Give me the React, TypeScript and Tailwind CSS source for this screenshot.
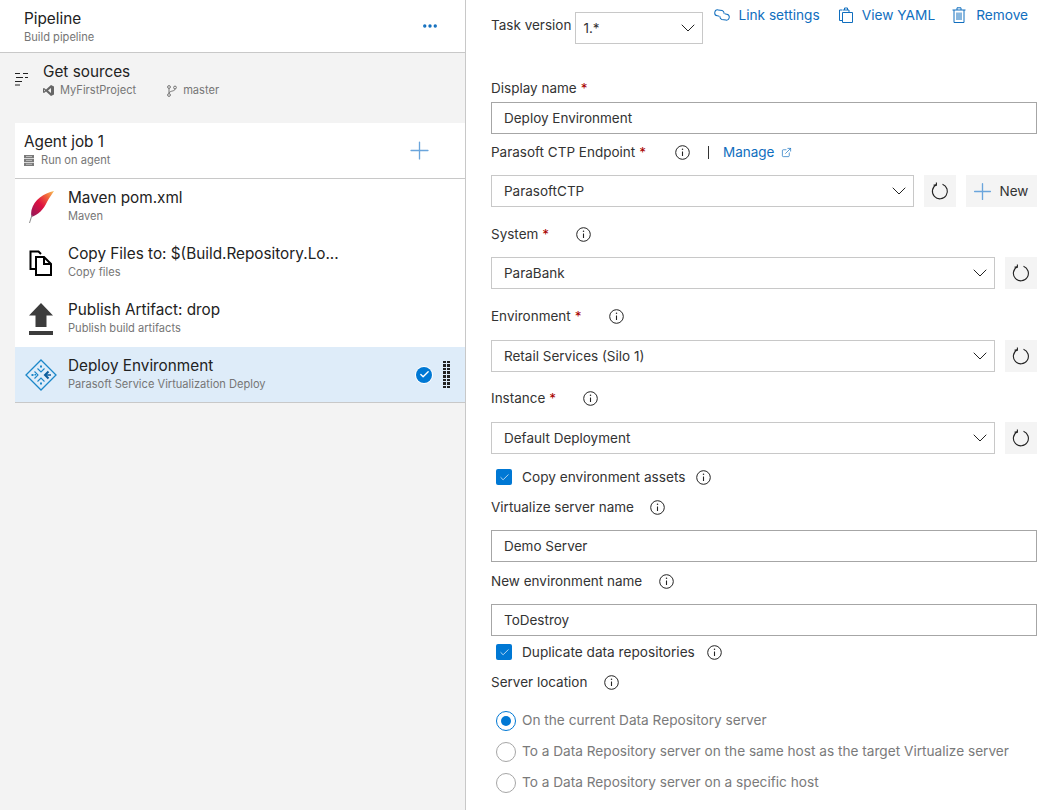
import { Check, ChevronDown, Ellipsis, ExternalLink, Plus } from "lucide-react";
import type { ReactNode } from "react";

const font = { fontFamily: "Inter, 'Noto Sans', sans-serif" };

function Info({ className = "" }: { className?: string }) {
  return (
    <svg viewBox="0 0 15 15" className={`h-[15px] w-[15px] shrink-0 text-[#222] ${className}`} fill="none" stroke="currentColor">
      <circle cx="7.5" cy="7.500" r="6.800" strokeWidth="1" />
      <path d="M7.500 6.500v4.500" strokeWidth="1.100" />
      <circle cx="7.500" cy="4.300" r="0.750" fill="currentColor" stroke="none" />
    </svg>
  );
}

function Star() {
  return <span className="ml-1 text-[#a80000]">*</span>;
}

function Label({ children, gap, required, top }: { children: ReactNode; gap: string; required?: boolean; top: string }) {
  return (
    <div className={`flex h-[20px] items-center text-[13.5px] leading-[20px] text-[#333] ${top}`}>
      <span>{children}</span>
      {required && <Star />}
      <Info className={gap} />
    </div>
  );
}

function TextBox({ value, className = "" }: { value: string; className?: string }) {
  return (
    <div className={`flex h-[32px] items-center border border-[#a6a6a6] px-[12px] text-[13.5px] text-[#333] ${className}`}>
      {value}
    </div>
  );
}

function Refresh() {
  return (
    <div className="flex h-[32px] w-[32px] shrink-0 items-center justify-center bg-[#f4f4f4]">
      <svg viewBox="0 0 18 18" className="h-[18px] w-[18px]" fill="none" stroke="#222" strokeWidth="1.100">
        <path d="M5.200 2.800A7.500 7.500 0 1 0 11.500 2.300" />
        <path d="M5.400 0.500V3.100H2.600" />
      </svg>
    </div>
  );
}

function Select({ value, className = "" }: { value: string; className?: string }) {
  return (
    <div className={`flex h-[32px] items-center justify-between border border-[#c8c8c8] pl-[12px] pr-[2px] text-[13.5px] text-[#333] ${className}`}>
      <span>{value}</span>
      <ChevronDown size={24} strokeWidth={1} className="text-[#222]" />
    </div>
  );
}

function Checkbox({ label, top, gap }: { label: string; top: string; gap: string }) {
  return (
    <div className={`flex h-[20px] items-center pl-[5px] text-[13.65px] text-[#333] ${top}`}>
      <span className="flex h-[16px] w-[16px] items-center justify-center rounded-[2px] bg-[#0078d4]">
        <Check size={11} strokeWidth={1.5} className="text-white" />
      </span>
      <span className="ml-[10px]">{label}</span>
      <Info className={gap} />
    </div>
  );
}

function Radio({ label, checked }: { label: string; checked?: boolean }) {
  return (
    <div className="flex h-[31px] items-center pl-[5px] text-[13.65px] text-[#7a7a7a]">
      <span className={`flex h-[20px] w-[20px] items-center justify-center rounded-full border ${checked ? "border-[#0078d4]" : "border-[#a6a6a6]"}`}>
        {checked && <span className="h-[10px] w-[10px] rounded-full bg-[#0078d4]" />}
      </span>
      <span className="ml-[6px]">{label}</span>
    </div>
  );
}

function Feather() {
  return (
    <svg viewBox="0 0 28 34" className="h-[34px] w-[28px]">
      <defs>
        <linearGradient id="feather" x1="0" y1="1" x2="1" y2="0">
          <stop offset="0" stopColor="#8e1a5c" />
          <stop offset="0.45" stopColor="#dd1040" />
          <stop offset="0.75" stopColor="#f2683a" />
          <stop offset="1" stopColor="#f5c35a" />
        </linearGradient>
      </defs>
      <path d="M27 1C17 3 7 10 4.500 20C4 23 4 25 4.500 27C11 25 17 19 20 12C22 8 25 4 27 1Z" fill="url(#feather)" />
      <path d="M5 25L2.500 33" stroke="#8a8a8a" strokeWidth="1" fill="none" />
    </svg>
  );
}

function CopyIcon() {
  return (
    <svg viewBox="0 0 24 26" className="h-[26px] w-[24px]" fill="none" stroke="#000" strokeWidth="2">
      <path d="M7 19H1.500V1.500H9.500L12 4" />
      <path d="M7 7H15L22 14V25H7Z" />
      <path d="M15 7V14H22" />
    </svg>
  );
}

function UploadIcon() {
  return (
    <svg viewBox="0 0 24 32" className="h-[32px] w-[24px]" fill="#3c3c3c">
      <path d="M12 0L24 12.500H17.500V24H6.500V12.500H0Z" />
      <rect x="0" y="28" width="24" height="4" />
    </svg>
  );
}

function ParasoftIcon() {
  return (
    <svg viewBox="0 0 32 32" className="h-[32px] w-[32px]" fill="none" stroke="#1b87c9">
      <path d="M16 1L31 16L16 31L1 16Z" strokeWidth="1.300" />
      <path d="M12.500 9.500L16 13L19.500 9.500M12.500 22.500L16 19L19.500 22.500M9.500 12.500L13 16L9.500 19.500" strokeWidth="1.100" />
      <path d="M23.500 12.500L20 16L23.500 19.500" stroke="#0b5d9c" strokeWidth="2" />
      <path d="M20.500 16H26" stroke="#0b5d9c" strokeWidth="1.500" />
      <g fill="#1b87c9" stroke="none">
        <rect x="15" y="6.500" width="2" height="2" />
        <rect x="15" y="23.500" width="2" height="2" />
        <rect x="6.500" y="15" width="2" height="2" />
        <rect x="9.500" y="15" width="1.500" height="1.500" />
      </g>
    </svg>
  );
}

function GetSourcesIcon() {
  return (
    <svg viewBox="0 0 15 14" className="h-[14px] w-[15px]" stroke="#222" strokeWidth="1">
      <path d="M1 1.500H6M9 1.500H14M2 5.500H9M11 5.500H14M1 9.500H8M1 13H6" />
    </svg>
  );
}

function VsIcon() {
  return (
    <svg viewBox="0 0 11 11" className="h-[11px] w-[11px]" fill="#666">
      <path d="M8 0L11 1.500V9.500L8 11L3 6.500L1 8L0 7.500V3.500L1 3L3 4.500ZM8 3L5 5.500L8 8ZM1 4.500V6.500L2 5.500Z" fillRule="evenodd" />
    </svg>
  );
}

function BranchIcon() {
  return (
    <svg viewBox="0 0 10 12" className="h-[12px] w-[10px]" fill="none" stroke="#666" strokeWidth="0.9">
      <circle cx="2" cy="2" r="1.400" />
      <circle cx="2" cy="10" r="1.400" />
      <circle cx="8" cy="2.500" r="1.400" />
      <path d="M2 3.500V8.500M8 4C8 6.500 3 5.500 2 8" />
    </svg>
  );
}

function AgentIcon() {
  return (
    <svg viewBox="0 0 10 11" className="h-[11px] w-[10px]" fill="#7a7a7a">
      <rect x="0" y="0" width="10" height="3.200" />
      <rect x="0" y="3.900" width="10" height="3.200" />
      <rect x="0" y="7.800" width="10" height="3.200" />
      <path d="M2 1.500H8M2 5.400H8M2 9.300H8" stroke="#fff" strokeWidth="0.500" />
    </svg>
  );
}

function LinkIcon() {
  return (
    <svg viewBox="0 0 16 12" className="h-[12px] w-[16px]" fill="none" stroke="#106ebe" strokeWidth="1">
      <path d="M5.500 7.500H3.500A3 3 0 0 1 3.500 1.500H7.500A3 3 0 0 1 9.800 4.500" transform="rotate(8 8 6)" />
      <path d="M10.500 4.500H12.500A3 3 0 0 1 12.500 10.500H8.500A3 3 0 0 1 6.200 7.500" transform="rotate(8 8 6)" />
    </svg>
  );
}

function YamlIcon() {
  return (
    <svg viewBox="0 0 14 16" className="h-[16px] w-[14px]" fill="none" stroke="#106ebe" strokeWidth="1">
      <path d="M3.500 3H0.500V13.500H3.500" />
      <path d="M3.500 5.500H13.500V15.500H3.500Z" />
      <path d="M4 3H10V5.500M5.500 3V1H8.500V3" />
    </svg>
  );
}

function TrashIcon() {
  return (
    <svg viewBox="0 0 14 16" className="h-[16px] w-[14px]" fill="none" stroke="#106ebe" strokeWidth="1">
      <path d="M0.500 3H13.500M5 3V0.800H9V3M2 3V15.500H12V3" />
      <path d="M5 5.500V13M7 5.500V13M9 5.500V13" />
    </svg>
  );
}

function RowText({ title, children }: { title: string; children: ReactNode }) {
  return (
    <div className="min-w-0 flex-1 pb-[3px]">
      <div className="text-[15.3px] leading-[22px] text-[#222]">{title}</div>
      <div className="flex items-center text-[11.1px] leading-[15px] text-[#767676]">{children}</div>
    </div>
  );
}

function TaskRow({ icon, title, sub, selected }: { icon: ReactNode; title: string; sub: string; selected?: boolean }) {
  return (
    <div className={`flex h-[56px] items-center ${selected ? "border-b border-[#c8c8c8] bg-[#deecf9]" : "bg-white"}`}>
      <div className="mr-[2px] flex w-[51px] shrink-0 justify-center">{icon}</div>
      <RowText title={title}>{sub}</RowText>
      {selected && (
        <div className="flex items-center">
          <span className="flex h-[16px] w-[16px] items-center justify-center rounded-full bg-[#0078d4] ring-1 ring-white">
            <Check size={11} strokeWidth={3} className="text-white" />
          </span>
          <div className="ml-[11px] mr-[15px] grid grid-cols-2 gap-x-[1.5px] gap-y-[1px]">
            {Array.from({ length: 16 }).map((_, i) => (
              <span key={i} className="h-[2.600px] w-[2.600px] bg-[#222]" />
            ))}
          </div>
        </div>
      )}
    </div>
  );
}

export default function App() {
  return (
    <div className="flex h-[810px] w-[1062px] overflow-hidden bg-white" style={font}>
      {/* Left: pipeline tree */}
      <div className="h-full w-[466px] shrink-0 border-r border-[#c8c8c8] bg-[#f3f3f3]">
        <div className="flex h-[53px] items-center justify-between border-b border-[#c8c8c8] bg-white pl-[24px] pr-[26px]">
          <div className="mt-[1px]">
            <div className="text-[15.3px] leading-[22px] text-[#222]">Pipeline</div>
            <div className="text-[11.1px] leading-[15px] text-[#767676]">Build pipeline</div>
          </div>
          <Ellipsis size={18} strokeWidth={2.5} className="text-[#106ebe]" />
        </div>

        <div className="flex h-[70px] items-start pl-[14px]">
          <div className="mt-[19px]"><GetSourcesIcon /></div>
          <div className="ml-[14px] mt-[8px]">
            <div className="text-[15.3px] leading-[22px] text-[#222]">Get sources</div>
            <div className="flex items-center text-[11.1px] leading-[15px] text-[#767676]">
              <VsIcon />
              <span className="ml-[6px]">MyFirstProject</span>
              <span className="ml-[31px]"><BranchIcon /></span>
              <span className="ml-[6px]">master</span>
            </div>
          </div>
        </div>

        <div className="ml-[15px]">
          <div className="flex h-[56px] items-center border-b border-[#c8c8c8] bg-white pl-[9px] pr-[31px]">
            <RowText title="Agent job 1">
              <AgentIcon />
              <span className="ml-[7px]">Run on agent</span>
            </RowText>
            <Plus size={29} strokeWidth={1.1} className="text-[#6aa5dc]" />
          </div>
          <TaskRow icon={<Feather />} title="Maven pom.xml" sub="Maven" />
          <TaskRow icon={<CopyIcon />} title="Copy Files to: $(Build.Repository.Lo..." sub="Copy files" />
          <TaskRow icon={<UploadIcon />} title="Publish Artifact: drop" sub="Publish build artifacts" />
          <TaskRow icon={<ParasoftIcon />} title="Deploy Environment" sub="Parasoft Service Virtualization Deploy" selected />
        </div>
      </div>

      {/* Right: task form */}
      <div className="w-[546px] shrink-0 pl-[25px]">
        <div className="w-[546px]">
          <div className="flex items-start">
            <span className="mt-[15px] text-[13.5px] leading-[20px] text-[#333]">Task version</span>
            <Select value="1.*" className="ml-[4px] mt-[12px] w-[128px] !pl-[7px]" />
            <div className="ml-[11px] mt-[5px] flex items-center text-[13.7px] leading-[20px] text-[#106ebe]">
              <LinkIcon />
              <span className="ml-[8px]">Link settings</span>
              <span className="ml-[19px]"><YamlIcon /></span>
              <span className="ml-[9px]">View YAML</span>
              <span className="ml-[17px]"><TrashIcon /></span>
              <span className="ml-[10px]">Remove</span>
            </div>
          </div>

          <div className="mt-[34px] flex h-[20px] items-center text-[13.5px] leading-[20px] text-[#333]">
            Display name<Star />
          </div>
          <TextBox value="Deploy Environment" className="mt-[4px]" />

          <div className="mt-[8px] flex h-[20px] items-center text-[13.5px] leading-[20px] text-[#333]">
            <span>Parasoft CTP Endpoint</span><Star />
            <Info className="ml-[29px]" />
            <span className="ml-[18px] h-[13px] w-px bg-[#333]" />
            <span className="ml-[14px] text-[#106ebe]">Manage</span>
            <ExternalLink size={11} strokeWidth={1.5} className="ml-[7px] text-[#106ebe]" />
          </div>
          <div className="mt-[13px] flex items-center">
            <Select value="ParasoftCTP" className="w-[423px]" />
            <div className="ml-[10px]"><Refresh /></div>
            <div className="ml-[10px] flex h-[32px] w-[71px] items-center justify-center bg-[#f4f4f4] text-[13.5px] text-[#333]">
              <Plus size={27} strokeWidth={1.2} className="-ml-[6px] mr-[4px] text-[#6aa5dc]" />New
            </div>
          </div>

          <Label gap="ml-[27px]" required top="mt-[17px]">System</Label>
          <div className="mt-[13px] flex items-center">
            <Select value="ParaBank" className="w-[504px]" />
            <div className="ml-[10px]"><Refresh /></div>
          </div>

          <Label gap="ml-[27px]" required top="mt-[17px]">Environment</Label>
          <div className="mt-[14px] flex items-center">
            <Select value="Retail Services (Silo 1)" className="w-[504px]" />
            <div className="ml-[10px]"><Refresh /></div>
          </div>

          <Label gap="ml-[27px]" required top="mt-[16px]">Instance</Label>
          <div className="mt-[14px] flex items-center">
            <Select value="Default Deployment" className="w-[504px]" />
            <div className="ml-[10px]"><Refresh /></div>
          </div>

          <Checkbox label="Copy environment assets" top="mt-[13px]" gap="ml-[11px]" />
          <Label gap="ml-[16px]" top="mt-[10px]">Virtualize server name</Label>
          <TextBox value="Demo Server" className="mt-[13px]" />
          <Label gap="ml-[17px]" top="mt-[9px]">New environment name</Label>
          <TextBox value="ToDestroy" className="mt-[13px]" />
          <Checkbox label="Duplicate data repositories" top="mt-[6px]" gap="ml-[12px]" />
          <Label gap="ml-[17px]" top="mt-[10px]">Server location</Label>
          <div className="mt-[13px]">
            <Radio label="On the current Data Repository server" checked />
            <Radio label="To a Data Repository server on the same host as the target Virtualize server" />
            <Radio label="To a Data Repository server on a specific host" />
          </div>
        </div>
      </div>
    </div>
  );
}
